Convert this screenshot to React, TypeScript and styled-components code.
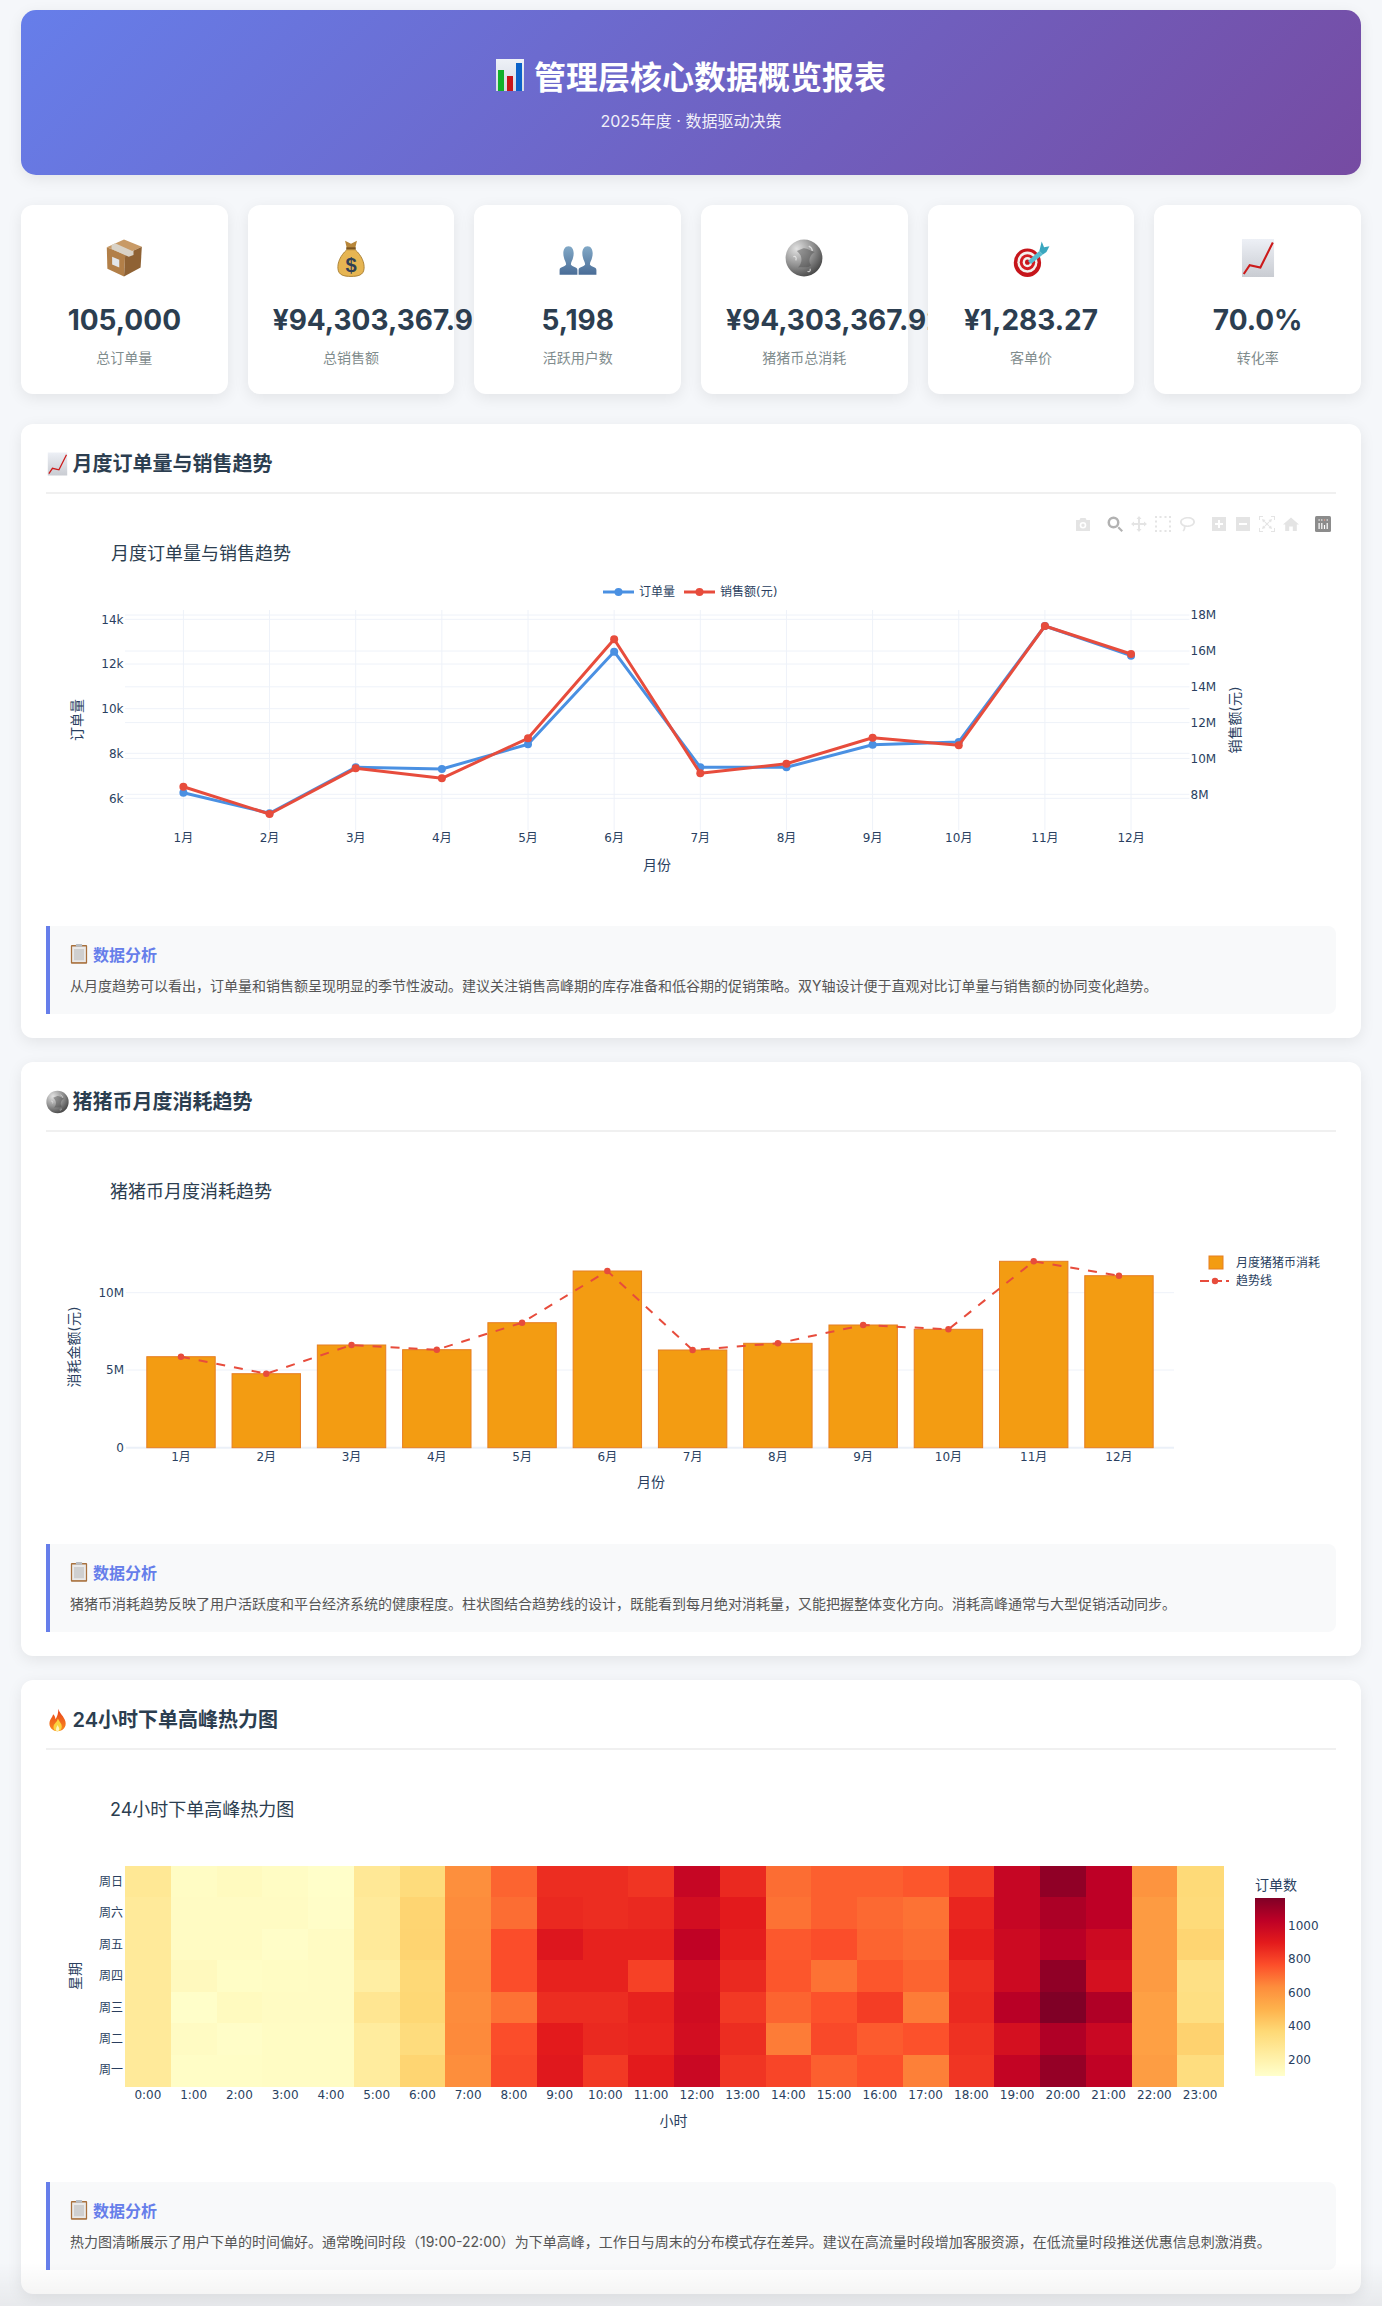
import { ReactNode } from "react";
import styled, { createGlobalStyle } from "styled-components";

const FONT = `Inter, "Noto Sans CJK SC", sans-serif`;
const PLOT_FONT = `"DejaVu Sans", "Noto Sans CJK SC", sans-serif`;

const MONTHS = ["1月", "2月", "3月", "4月", "5月", "6月", "7月", "8月", "9月", "10月", "11月", "12月"];

const ORDER_Y = [792.7, 813.3, 767.3, 769, 744.3, 651.7, 767.3, 767.3, 744.7, 742, 626, 655.7];
const SALES_Y = [786.7, 814, 768.3, 778.3, 738.3, 639.3, 773.3, 763.7, 737.7, 745.3, 626, 654];
const BAR_TOPS = [1356.7, 1373.7, 1345, 1349.7, 1322.7, 1271, 1350, 1343.3, 1325, 1329.3, 1261.3, 1275.7];

const DAYS = ["周日", "周六", "周五", "周四", "周三", "周二", "周一"];
const HEAT = [
  [270, 125, 140, 125, 110, 265, 350, 625, 720, 850, 850, 830, 1000, 860, 700, 730, 730, 750, 820, 1000, 1130, 1030, 610, 360],
  [255, 130, 130, 130, 115, 255, 380, 635, 700, 860, 850, 860, 960, 900, 690, 730, 710, 690, 870, 1000, 1070, 1030, 585, 355],
  [255, 130, 130, 115, 130, 255, 385, 640, 770, 920, 880, 880, 1020, 890, 745, 770, 720, 700, 890, 980, 1040, 980, 585, 380],
  [255, 145, 120, 125, 130, 225, 365, 645, 770, 880, 880, 800, 960, 860, 750, 690, 750, 720, 850, 980, 1130, 950, 585, 320],
  [255, 110, 140, 130, 130, 280, 370, 635, 690, 850, 850, 880, 970, 820, 720, 760, 810, 670, 860, 1040, 1165, 1060, 565, 330],
  [255, 130, 115, 125, 125, 240, 345, 640, 770, 900, 860, 870, 960, 850, 670, 780, 740, 760, 840, 950, 1060, 990, 565, 390],
  [255, 120, 120, 125, 125, 240, 380, 630, 780, 910, 820, 900, 990, 830, 790, 730, 765, 660, 830, 1010, 1120, 1020, 575, 340],
];

const SCALE: [number, number, number][] = [
  [255, 255, 204],
  [255, 237, 160],
  [254, 217, 118],
  [254, 178, 76],
  [253, 141, 60],
  [252, 78, 42],
  [227, 26, 28],
  [189, 0, 38],
  [128, 0, 38],
];

const heatColor = (value: number) => {
  const t = Math.min(Math.max((value - 102) / (1165 - 102), 0), 1) * (SCALE.length - 1);
  const i = Math.min(Math.floor(t), SCALE.length - 2);
  const f = t - i;
  const [r, g, b] = SCALE[i].map((c, n) => Math.round(c + (SCALE[i + 1][n] - c) * f));
  return `rgb(${r},${g},${b})`;
};

const GlobalStyle = createGlobalStyle`
  html, body {
    margin: 0;
    padding: 0;
    background: #f5f7fa;
  }
  body {
    position: relative;
    font-family: ${FONT};
    color: #2c3e50;
  }
`;

const Page = styled.div`
  box-sizing: border-box;
  width: 1382px;
  height: 2306px;
  padding: 10px 21px 12px;
  display: flex;
  flex-direction: column;
  gap: 24px;
`;

const BottomFade = styled.div`
  position: absolute;
  left: 0;
  right: 0;
  top: 2262px;
  height: 44px;
  background: linear-gradient(rgba(0, 0, 0, 0), rgba(0, 0, 0, 0.055));
  pointer-events: none;
`;

const Header = styled.header`
  height: 165px;
  box-sizing: border-box;
  margin-bottom: 6px;
  padding-top: 40px;
  border-radius: 15px;
  background: linear-gradient(135deg, #667eea 0%, #764ba2 100%);
  color: #fff;
  text-align: center;
  box-shadow: 0 4px 15px rgba(0, 0, 0, 0.08);
`;

const Title = styled.h1`
  margin: 0 0 9px;
  display: flex;
  justify-content: center;
  align-items: center;
  gap: 10px;
  height: 50px;
  font-size: 32px;
  font-weight: 700;
`;

const TitleIcon = styled.span`
  width: 28px;
  height: 32px;
  display: flex;
  svg {
    width: 100%;
    height: 100%;
  }
`;

const Subtitle = styled.p`
  margin: 0;
  font-size: 16px;
  line-height: 24px;
  opacity: 0.9;
`;

const CardGrid = styled.div`
  display: grid;
  grid-template-columns: repeat(6, 1fr);
  gap: 20px;
  margin-bottom: 6px;
`;

const Card = styled.div`
  position: relative;
  min-width: 0;
  box-sizing: border-box;
  height: 189px;
  padding: 25px;
  background: #fff;
  border-radius: 12px;
  text-align: center;
  box-shadow: 0 4px 15px rgba(0, 0, 0, 0.08);
`;

const CardIcon = styled.div`
  height: 56px;
  margin-bottom: 16px;
  display: flex;
  justify-content: center;
  align-items: center;
  svg {
    width: 38px;
    height: 38px;
  }
`;

const CardValue = styled.div`
  font-size: 28px;
  line-height: 36px;
  font-weight: 700;
  color: #2c3e50;
`;

const CardLabel = styled.div`
  margin-top: 9px;
  font-size: 14px;
  line-height: 22px;
  color: #7f8c8d;
`;

const Section = styled.section`
  box-sizing: border-box;
  padding: 25px 25px 24px;
  background: #fff;
  border-radius: 12px;
  box-shadow: 0 4px 15px rgba(0, 0, 0, 0.08);
`;

const SectionTitle = styled.h2`
  margin: 0;
  height: 43px;
  box-sizing: content-box;
  display: flex;
  align-items: flex-start;
  gap: 4px;
  border-bottom: 2px solid #f0f0f0;
  font-size: 20px;
  line-height: 30px;
  font-weight: 600;
  color: #2c3e50;
  svg {
    width: 23px;
    height: 24px;
    margin-top: 3px;
    margin-left: -0.5px;
    flex-shrink: 0;
  }
`;

const ChartBox = styled.div`
  position: relative;
`;

const ChartSvg = styled.svg`
  display: block;
`;

const PlotTitle = styled.text`
  font-family: ${FONT};
  font-size: 18px;
  fill: #2c3e50;
`;

const Tick = styled.text`
  font-family: ${PLOT_FONT};
  font-size: 12px;
  fill: #2a3f5f;
`;

const AxisTitle = styled.text`
  font-family: ${PLOT_FONT};
  font-size: 14px;
  fill: #2a3f5f;
`;

const LegendText = styled.text`
  font-family: ${PLOT_FONT};
  font-size: 12px;
  fill: #2a3f5f;
`;

const ModeBar = styled.div`
  position: absolute;
  top: 22px;
  right: 5px;
  display: flex;
  gap: 16px;
`;

const ModeGroup = styled.div`
  display: flex;
  gap: 8px;
`;

const ModeIcon = styled.svg<{ $tone?: string }>`
  display: block;
  width: 16px;
  height: 16px;
  fill: ${(p) => p.$tone ?? "#e4e4e4"};
  stroke: none;
`;

const Analysis = styled.div`
  box-sizing: border-box;
  height: 88px;
  padding: 16px 20px;
  background: #f8f9fa;
  border-left: 4px solid #667eea;
  border-radius: 0 8px 8px 0;
`;

const AnalysisTitle = styled.h4`
  margin: 0 0 8px;
  height: 24px;
  display: flex;
  align-items: center;
  gap: 5px;
  font-size: 16px;
  font-weight: 700;
  color: #667eea;
  svg {
    width: 18px;
    height: 20px;
  }
`;

const AnalysisText = styled.p`
  margin: 0;
  font-size: 14px;
  line-height: 24px;
  color: #555;
  white-space: nowrap;
`;

const BarsEmoji = () => (
  <svg viewBox="0 0 56 64">
    <defs>
      <linearGradient id="paperA" x1="0" y1="0" x2="0" y2="1">
        <stop offset="0" stopColor="#eef1f7" />
        <stop offset="1" stopColor="#d5dae3" />
      </linearGradient>
    </defs>
    <rect width="56" height="64" fill="url(#paperA)" />
    <rect x="4" y="22" width="12" height="42" fill="#12b02a" />
    <rect x="22" y="34" width="12" height="30" fill="#c8151b" />
    <rect x="40" y="8" width="12" height="56" fill="#0b62c9" />
  </svg>
);

const TrendEmoji = () => (
  <svg viewBox="0 0 64 64">
    <defs>
      <linearGradient id="paperB" x1="0" y1="0" x2="0" y2="1">
        <stop offset="0" stopColor="#edf0f6" />
        <stop offset="1" stopColor="#c9ccd2" />
      </linearGradient>
    </defs>
    <rect x="5" y="0" width="54" height="64" fill="url(#paperB)" />
    <polyline points="8,59 18,44 36,48 57,6" fill="none" stroke="#cc1a1a" strokeWidth="3.5" />
  </svg>
);

const BoxEmoji = () => (
  <svg viewBox="0 0 64 64">
    <polygon points="32,1 62,13 34,26 3,14" fill="#c89a66" />
    <polygon points="3,14 34,26 32,63 4,50" fill="#b27f48" />
    <polygon points="34,26 62,13 60,48 32,63" fill="#8f6234" />
    <polygon points="17,7 46,20 48,19 48,27 40,30 11,17 11,10" fill="#d9d2c6" />
    <polygon points="12,30 24,35 24,48 12,43" fill="#e2e6ea" />
  </svg>
);

const BagEmoji = () => (
  <svg viewBox="0 0 64 64">
    <path d="M22 3 L32 8 L42 3 L39 16 L25 16 Z" fill="#b8873a" />
    <rect x="24" y="14" width="16" height="4" fill="#7b5420" />
    <path d="M25 18 C14 28 9 40 10 50 C11 61 20 63 32 63 C44 63 53 61 54 50 C55 40 50 28 39 18 Z" fill="#e6b552" stroke="#a57a2e" strokeWidth="1.5" />
    <text x="32" y="55" textAnchor="middle" fontFamily="Liberation Sans, sans-serif" fontWeight="700" fontSize="34" fill="#2f3f55">$</text>
  </svg>
);

const PeopleEmoji = () => (
  <svg viewBox="0 0 64 64">
    <defs>
      <linearGradient id="busts" x1="0" y1="0" x2="0" y2="1">
        <stop offset="0" stopColor="#82a9c7" />
        <stop offset="1" stopColor="#4a6d97" />
      </linearGradient>
    </defs>
    <path d="M16 12 C8 12 6 22 8 30 C9 36 12 39 12 43 C10 47 1 47 1 52 L1 60 L31 60 L31 52 C31 47 22 47 20 43 C20 39 23 36 24 30 C26 22 24 12 16 12 Z" fill="url(#busts)" />
    <path d="M48 12 C40 12 38 22 40 30 C41 36 44 39 44 43 C42 47 33 47 33 52 L33 60 L63 60 L63 52 C63 47 54 47 52 43 C52 39 55 36 56 30 C58 22 56 12 48 12 Z" fill="url(#busts)" />
  </svg>
);

const CoinEmoji = ({ id }: { id: string }) => (
  <svg viewBox="0 0 64 64">
    <defs>
      <radialGradient id={id} cx="0.3" cy="0.25" r="0.9">
        <stop offset="0" stopColor="#e2e2e2" />
        <stop offset="0.5" stopColor="#929292" />
        <stop offset="1" stopColor="#363636" />
      </radialGradient>
    </defs>
    <circle cx="32" cy="32" r="31" fill={`url(#${id})`} />
    <path d="M20 20 C30 28 30 40 22 48 C30 46 38 50 44 44 C38 38 42 26 50 22 C42 20 36 14 30 16 Z" fill="#4a4a4a" opacity="0.45" />
    <path d="M14 30 C18 28 20 32 18 36 M42 50 C44 54 40 56 38 54 M40 12 C44 14 46 16 46 20" fill="none" stroke="#f2f2f2" strokeWidth="2" opacity="0.7" />
  </svg>
);

const TargetEmoji = () => (
  <svg viewBox="0 0 64 64">
    <ellipse cx="26" cy="40" rx="23" ry="24" fill="#c6151b" />
    <ellipse cx="26" cy="39" rx="17" ry="18" fill="#f4f1ee" />
    <ellipse cx="26" cy="39" rx="13" ry="13.5" fill="#d31c22" />
    <ellipse cx="26" cy="39" rx="8" ry="8.5" fill="#f4f1ee" />
    <ellipse cx="26" cy="39" rx="4" ry="4.5" fill="#c6151b" />
    <polygon points="27,37 46,20 52,26 32,42" fill="#58bcd0" />
    <polygon points="46,20 50,4 54,14 63,12 58,22 52,26" fill="#3aa7bf" />
  </svg>
);

const FireEmoji = () => (
  <svg viewBox="0 0 64 64">
    <defs>
      <linearGradient id="flame" x1="0" y1="0" x2="0" y2="1">
        <stop offset="0" stopColor="#e8401c" />
        <stop offset="1" stopColor="#f98a1e" />
      </linearGradient>
    </defs>
    <path d="M34 1 C38 14 50 22 54 36 C58 52 46 63 32 63 C18 63 7 52 10 37 C12 28 18 24 20 16 C25 20 26 26 26 30 C31 24 35 12 34 1 Z" fill="url(#flame)" />
    <path d="M33 28 C36 36 44 42 44 50 C44 58 38 63 32 63 C25 63 20 58 21 50 C22 43 31 38 33 28 Z" fill="#fbd23e" />
    <path d="M32 46 C34 50 37 53 37 57 C37 61 34 63 32 63 C29 63 27 60 28 57 C28 53 31 51 32 46 Z" fill="#fdf3c0" />
  </svg>
);

const ClipboardEmoji = () => (
  <svg viewBox="0 0 56 64">
    <rect x="2" y="3" width="52" height="60" rx="3" fill="#a8703c" />
    <rect x="6" y="8" width="44" height="50" fill="#e9e9e9" />
    <rect x="12" y="16" width="32" height="36" fill="#cfcfcf" />
    <rect x="18" y="0" width="20" height="9" rx="2" fill="#b9bdc2" />
  </svg>
);

const StatCards: { icon: ReactNode; value: string; label: string }[] = [
  { icon: <BoxEmoji />, value: "105,000", label: "总订单量" },
  { icon: <BagEmoji />, value: "¥94,303,367.92", label: "总销售额" },
  { icon: <PeopleEmoji />, value: "5,198", label: "活跃用户数" },
  { icon: <CoinEmoji id="coinCard" />, value: "¥94,303,367.92", label: "猪猪币总消耗" },
  { icon: <TargetEmoji />, value: "¥1,283.27", label: "客单价" },
  { icon: <TrendEmoji />, value: "70.0%", label: "转化率" },
];

const Toolbar = () => (
  <ModeBar>
    <ModeGroup>
      <ModeIcon viewBox="0 0 16 16">
        <path fillRule="evenodd" d="M1 4 H4.5 L5.5 2 H10.5 L11.5 4 H15 V15 H1 Z M8 6 A3.3 3.3 0 1 0 8 12.6 A3.3 3.3 0 1 0 8 6 Z M8 7.6 A1.7 1.7 0 1 1 8 11 A1.7 1.7 0 1 1 8 7.6 Z" />
      </ModeIcon>
    </ModeGroup>
    <ModeGroup>
      <ModeIcon viewBox="0 0 16 16" $tone="#b2b2b2">
        <path fillRule="evenodd" d="M6.5 0.5 A6 6 0 1 1 6.5 12.5 A6 6 0 1 1 6.5 0.5 Z M6.5 3 A3.5 3.5 0 1 0 6.5 10 A3.5 3.5 0 1 0 6.5 3 Z" />
        <path d="M10.5 12 L12 10.5 L16 14.5 L14.5 16 Z" />
      </ModeIcon>
      <ModeIcon viewBox="0 0 16 16">
        <path d="M8 0 L10.5 3 H9 V7 H13 V5.5 L16 8 L13 10.5 V9 H9 V13 H10.5 L8 16 L5.5 13 H7 V9 H3 V10.5 L0 8 L3 5.5 V7 H7 V3 H5.5 Z" />
      </ModeIcon>
      <ModeIcon viewBox="0 0 16 16">
        <path d="M0 0h2v2H0z M4.5 0h2v2h-2z M9.5 0h2v2h-2z M14 0h2v2h-2z M0 4.5h2v2H0z M14 4.5h2v2h-2z M0 9.5h2v2H0z M14 9.5h2v2h-2z M0 14h2v2H0z M4.5 14h2v2h-2z M9.5 14h2v2h-2z M14 14h2v2h-2z" />
      </ModeIcon>
      <ModeIcon viewBox="0 0 16 16">
        <path fillRule="evenodd" d="M9 1 C13 1 16 3 16 6 C16 9 12 11 8 11 C7.5 11 7 11 6.5 10.9 C6.7 12.5 6 14.5 4.5 15.5 L3.5 14.5 C4.5 13.5 5 12 4.7 10.4 C2.5 9.6 1 8 1 6 C1 3 5 1 9 1 Z M9 2.6 C5.8 2.6 2.8 4 2.8 6 C2.8 8 5.8 9.4 8.5 9.4 C11.5 9.4 14.2 8 14.2 6 C14.2 4 12 2.6 9 2.6 Z" />
      </ModeIcon>
    </ModeGroup>
    <ModeGroup>
      <ModeIcon viewBox="0 0 16 16">
        <path fillRule="evenodd" d="M1 1 H15 V15 H1 Z M7 4 V7 H4 V9 H7 V12 H9 V9 H12 V7 H9 V4 Z" />
      </ModeIcon>
      <ModeIcon viewBox="0 0 16 16">
        <path fillRule="evenodd" d="M1 1 H15 V15 H1 Z M4 7 V9 H12 V7 Z" />
      </ModeIcon>
      <ModeIcon viewBox="0 0 16 16">
        <path d="M0 0 H4 V1 H1 V4 H0 Z M12 0 H16 V4 H15 V1 H12 Z M0 12 H1 V15 H4 V16 H0 Z M15 12 H16 V16 H12 V15 H15 Z" />
        <path d="M3 3 L6.5 4 L5.5 5 L8 7.2 L10.5 5 L9.5 4 L13 3 L12 6.5 L11 5.5 L8.8 8 L11 10.5 L12 9.5 L13 13 L9.5 12 L10.5 11 L8 8.8 L5.5 11 L6.5 12 L3 13 L4 9.5 L5 10.5 L7.2 8 L5 5.5 L4 6.5 Z" />
      </ModeIcon>
      <ModeIcon viewBox="0 0 16 16">
        <path d="M8 1.5 L16 8.5 L13.8 8.5 L13.8 15 L9.8 15 L9.8 10.5 L6.2 10.5 L6.2 15 L2.2 15 L2.2 8.5 L0 8.5 Z" />
      </ModeIcon>
    </ModeGroup>
    <ModeGroup>
      <ModeIcon viewBox="0 0 16 16" $tone="#8c8c8c">
        <rect width="16" height="16" rx="1.5" />
        <path d="M3.5 7h1.2v6H3.5z M6.2 7h1.2v6H6.2z M8.9 9h1.2v4H8.9z M11.6 7h1.2v6h-1.2z" fill="#fff" />
        <circle cx="4.1" cy="4" r="0.7" fill="#fff" />
        <circle cx="6.8" cy="4" r="0.7" fill="#fff" />
        <circle cx="9.5" cy="4" r="0.7" fill="#f5a08a" />
        <circle cx="12.2" cy="4" r="0.7" fill="#fff" />
      </ModeIcon>
    </ModeGroup>
  </ModeBar>
);

const GRID = "#eef2f9";

const SeriesLine = ({ ys, color, xAt, width = 3, r = 4, dash }: { ys: number[]; color: string; xAt: (i: number) => number; width?: number; r?: number; dash?: string }) => (
  <g>
    <polyline points={ys.map((y, i) => `${xAt(i)},${y}`).join(" ")} fill="none" stroke={color} strokeWidth={width} strokeDasharray={dash} strokeLinejoin="round" />
    {ys.map((y, i) => (
      <circle key={i} cx={xAt(i)} cy={y} r={r} fill={color} />
    ))}
  </g>
);

const TrendChart = () => {
  const xAt = (i: number) => 183.4 + i * 86.15;
  const left: [string, number][] = [["14k", 619.3], ["12k", 664], ["10k", 708.7], ["8k", 753.3], ["6k", 798.3]];
  const right: [string, number][] = [["18M", 615], ["16M", 651], ["14M", 686.8], ["12M", 722.6], ["10M", 758.4], ["8M", 794.3]];
  return (
    <ChartBox>
      <ChartSvg width="1290" height="432" viewBox="46 494 1290 432">
        <PlotTitle x="111" y="554" dy=".35em">月度订单量与销售趋势</PlotTitle>
        {MONTHS.map((_, i) => (
          <line key={i} x1={xAt(i)} x2={xAt(i)} y1="610" y2="830" stroke={GRID} />
        ))}
        {left.map(([label, y]) => (
          <g key={label}>
            <line x1="125" x2="1189.5" y1={y} y2={y} stroke={GRID} />
            <Tick x="123.5" y={y} dy=".35em" textAnchor="end">{label}</Tick>
          </g>
        ))}
        {right.map(([label, y]) => (
          <g key={label}>
            <line x1="125" x2="1189.5" y1={y} y2={y} stroke={GRID} />
            <Tick x="1190.5" y={y} dy=".35em">{label}</Tick>
          </g>
        ))}
        <SeriesLine ys={ORDER_Y} color="#4a90e2" xAt={xAt} />
        <SeriesLine ys={SALES_Y} color="#e74c3c" xAt={xAt} />
        {MONTHS.map((m, i) => (
          <Tick key={m} x={xAt(i)} y="838" dy=".35em" textAnchor="middle">{m}</Tick>
        ))}
        <AxisTitle x="657" y="865" dy=".35em" textAnchor="middle">月份</AxisTitle>
        <AxisTitle x="77" y="720" dy=".35em" textAnchor="middle" transform="rotate(-90 77 720)">订单量</AxisTitle>
        <AxisTitle x="1235" y="720" dy=".35em" textAnchor="middle" transform="rotate(-90 1235 720)">销售额(元)</AxisTitle>
        <line x1="603" x2="634" y1="592" y2="592" stroke="#4a90e2" strokeWidth="3" />
        <circle cx="618.5" cy="592" r="4" fill="#4a90e2" />
        <LegendText x="639" y="592" dy=".35em">订单量</LegendText>
        <line x1="684" x2="715" y1="592" y2="592" stroke="#e74c3c" strokeWidth="3" />
        <circle cx="699.5" cy="592" r="4" fill="#e74c3c" />
        <LegendText x="720" y="592" dy=".35em">销售额(元)</LegendText>
      </ChartSvg>
      <Toolbar />
    </ChartBox>
  );
};

const CoinChart = () => {
  const xAt = (i: number) => 181 + i * 85.27;
  const base = 1447.7;
  return (
    <ChartBox>
      <ChartSvg width="1290" height="412" viewBox="46 1132 1290 412">
        <PlotTitle x="110" y="1191.7" dy=".35em">猪猪币月度消耗趋势</PlotTitle>
        {[["10M", 1292.7], ["5M", 1370]].map(([label, y]) => (
          <g key={label}>
            <line x1="126" x2="1174" y1={y} y2={y} stroke={GRID} />
            <Tick x="124" y={y} dy=".35em" textAnchor="end">{label}</Tick>
          </g>
        ))}
        <line x1="126" x2="1174" y1={base} y2={base} stroke="#ebf0f8" strokeWidth="2" />
        <Tick x="124" y={base} dy=".35em" textAnchor="end">0</Tick>
        {BAR_TOPS.map((top, i) => (
          <rect key={i} x={xAt(i) - 34.2} y={top} width="68.4" height={base - top} fill="#f39c12" stroke="#e67e22" />
        ))}
        <SeriesLine ys={BAR_TOPS} color="#e74c3c" xAt={xAt} width={2} r={3.2} dash="9,9" />
        {MONTHS.map((m, i) => (
          <Tick key={m} x={xAt(i)} y="1457" dy=".35em" textAnchor="middle">{m}</Tick>
        ))}
        <AxisTitle x="651" y="1482" dy=".35em" textAnchor="middle">月份</AxisTitle>
        <AxisTitle x="74" y="1347" dy=".35em" textAnchor="middle" transform="rotate(-90 74 1347)">消耗金额(元)</AxisTitle>
        <rect x="1209" y="1256" width="14" height="13" fill="#f39c12" stroke="#e67e22" />
        <LegendText x="1236" y="1262.7" dy=".35em">月度猪猪币消耗</LegendText>
        <line x1="1200" x2="1229" y1="1281" y2="1281" stroke="#e74c3c" strokeWidth="2" strokeDasharray="9,4" />
        <circle cx="1215" cy="1281" r="3.2" fill="#e74c3c" />
        <LegendText x="1236" y="1281" dy=".35em">趋势线</LegendText>
      </ChartSvg>
    </ChartBox>
  );
};

const HeatChart = () => {
  const cellW = 1098 / 24;
  const cellH = 220 / 7;
  const colorTicks: [string, number][] = [["1000", 1925.7], ["800", 1958.9], ["600", 1992.5], ["400", 2026], ["200", 2059.6]];
  return (
    <ChartBox>
      <ChartSvg width="1290" height="432" viewBox="46 1750 1290 432">
        <defs>
          <linearGradient id="colorbar" x1="0" y1="1" x2="0" y2="0">
            {SCALE.map(([r, g, b], i) => (
              <stop key={i} offset={i / (SCALE.length - 1)} stopColor={`rgb(${r},${g},${b})`} />
            ))}
          </linearGradient>
        </defs>
        <PlotTitle x="110" y="1810" dy=".35em">24小时下单高峰热力图</PlotTitle>
        <g shapeRendering="crispEdges">
          {HEAT.map((row, r) =>
            row.map((value, c) => (
              <rect key={`${r}-${c}`} x={125 + c * cellW} y={1866 + r * cellH} width={cellW + 0.5} height={cellH + 0.5} fill={heatColor(value)} />
            )),
          )}
        </g>
        {DAYS.map((d, r) => (
          <Tick key={d} x="123" y={1866 + (r + 0.5) * cellH} dy=".35em" textAnchor="end">{d}</Tick>
        ))}
        {HEAT[0].map((_, c) => (
          <Tick key={c} x={125 + (c + 0.5) * cellW} y="2095" dy=".35em" textAnchor="middle">{`${c}:00`}</Tick>
        ))}
        <AxisTitle x="673.5" y="2121" dy=".35em" textAnchor="middle">小时</AxisTitle>
        <AxisTitle x="75.5" y="1976" dy=".35em" textAnchor="middle" transform="rotate(-90 75.5 1976)">星期</AxisTitle>
        <AxisTitle x="1255" y="1885" dy=".35em">订单数</AxisTitle>
        <rect x="1255" y="1898" width="30" height="178" fill="url(#colorbar)" />
        {colorTicks.map(([label, y]) => (
          <Tick key={label} x="1288" y={y} dy=".35em">{label}</Tick>
        ))}
      </ChartSvg>
    </ChartBox>
  );
};

const AnalysisBox = ({ children }: { children: string }) => (
  <Analysis>
    <AnalysisTitle>
      <ClipboardEmoji />
      数据分析
    </AnalysisTitle>
    <AnalysisText>{children}</AnalysisText>
  </Analysis>
);

const App = () => (
  <>
    <GlobalStyle />
    <Page>
      <Header>
        <Title>
          <TitleIcon>
            <BarsEmoji />
          </TitleIcon>
          管理层核心数据概览报表
        </Title>
        <Subtitle>2025年度 · 数据驱动决策</Subtitle>
      </Header>
      <CardGrid>
        {StatCards.map((card, i) => (
          <Card key={i}>
            <CardIcon>{card.icon}</CardIcon>
            <CardValue>{card.value}</CardValue>
            <CardLabel>{card.label}</CardLabel>
          </Card>
        ))}
      </CardGrid>
      <Section>
        <SectionTitle>
          <TrendEmoji />
          月度订单量与销售趋势
        </SectionTitle>
        <TrendChart />
        <AnalysisBox>从月度趋势可以看出，订单量和销售额呈现明显的季节性波动。建议关注销售高峰期的库存准备和低谷期的促销策略。双Y轴设计便于直观对比订单量与销售额的协同变化趋势。</AnalysisBox>
      </Section>
      <Section>
        <SectionTitle>
          <CoinEmoji id="coinHead" />
          猪猪币月度消耗趋势
        </SectionTitle>
        <CoinChart />
        <AnalysisBox>猪猪币消耗趋势反映了用户活跃度和平台经济系统的健康程度。柱状图结合趋势线的设计，既能看到每月绝对消耗量，又能把握整体变化方向。消耗高峰通常与大型促销活动同步。</AnalysisBox>
      </Section>
      <Section>
        <SectionTitle>
          <FireEmoji />
          24小时下单高峰热力图
        </SectionTitle>
        <HeatChart />
        <AnalysisBox>热力图清晰展示了用户下单的时间偏好。通常晚间时段（19:00-22:00）为下单高峰，工作日与周末的分布模式存在差异。建议在高流量时段增加客服资源，在低流量时段推送优惠信息刺激消费。</AnalysisBox>
      </Section>
    </Page>
    <BottomFade />
  </>
);

export default App;
